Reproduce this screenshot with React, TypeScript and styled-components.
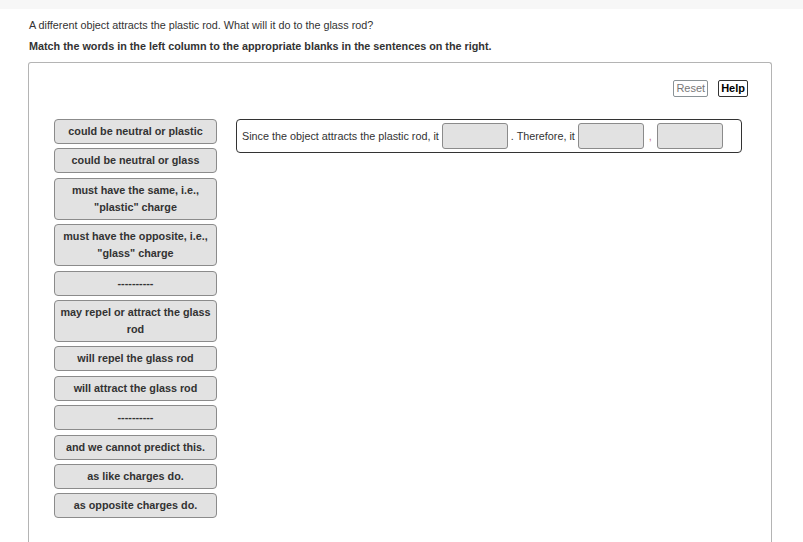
import styled, { createGlobalStyle } from "styled-components"

const GlobalStyle = createGlobalStyle`
  html, body {
    margin: 0;
    padding: 0;
    background: #fff;
    font-family: "Liberation Sans", Arial, sans-serif;
    color: #333;
  }
`

const TopStrip = styled.div`
  height: 9px;
  background: #f7f7f7;
`

const Content = styled.div`
  padding: 9px 31px 0 28px;
`

const Prompt = styled.p<{ bold?: boolean }>`
  margin: 0 0 0 1px;
  font-size: 10.8px;
  line-height: 13px;
  font-weight: ${({ bold }) => (bold ? 700 : 400)};
  padding-top: ${({ bold }) => (bold ? "0" : "1px")};
  padding-bottom: ${({ bold }) => (bold ? "9px" : "8px")};
`

const Panel = styled.div`
  border: 1px solid #b4b4b4;
  border-bottom: none;
  border-radius: 3px 3px 0 0;
  height: 490px;
  padding: 17px 23px 0 25px;
  box-sizing: border-box;
`

const Toolbar = styled.div`
  display: flex;
  justify-content: flex-end;
  gap: 10px;
`

const ToolButton = styled.button<{ strong?: boolean }>`
  font-family: "Liberation Sans", Arial, sans-serif;
  font-size: 11px;
  height: 17px;
  padding: 0 2px;
  line-height: 15px;
  background: #fff;
  border-radius: 2px;
  border: 1px solid ${({ strong }) => (strong ? "#333" : "#8a9296")};
  color: ${({ strong }) => (strong ? "#000" : "#777")};
  font-weight: ${({ strong }) => (strong ? 700 : 400)};
`

const Workspace = styled.div`
  display: flex;
  align-items: flex-start;
  gap: 19px;
  margin-top: 22px;
`

const WordColumn = styled.div`
  display: flex;
  flex-direction: column;
  gap: 4.4px;
  width: 163px;
  flex: none;
`

const WordCard = styled.div`
  box-sizing: border-box;
  border: 1px solid #8b8b8b;
  border-radius: 4px;
  background: #e2e2e2;
  padding: 3px 4px;
  font-size: 10.8px;
  line-height: 17px;
  font-weight: 700;
  text-align: center;
  color: #333;
  min-height: 25px;
`

const Sentence = styled.div`
  flex: none;
  display: flex;
  align-items: center;
  gap: 3px;
  border: 1px solid #333;
  border-radius: 4px;
  padding: 3px 18px 3px 5px;
  font-size: 10.8px;
  color: #333;
`

const Blank = styled.span`
  display: inline-block;
  box-sizing: border-box;
  width: 66px;
  height: 26px;
  border: 1px solid #8b8b8b;
  border-radius: 3px;
  background: #e2e2e2;
`

const Punct = styled.span`
  color: #c77;
  padding: 0 2px;
`

const words = [
  "could be neutral or plastic",
  "could be neutral or glass",
  'must have the same, i.e., "plastic" charge',
  'must have the opposite, i.e., "glass" charge',
  "----------",
  "may repel or attract the glass rod",
  "will repel the glass rod",
  "will attract the glass rod",
  "----------",
  "and we cannot predict this.",
  "as like charges do.",
  "as opposite charges do.",
]

export default function App() {
  return (
    <>
      <GlobalStyle />
      <TopStrip />
      <Content>
        <Prompt>A different object attracts the plastic rod. What will it do to the glass rod?</Prompt>
        <Prompt bold>Match the words in the left column to the appropriate blanks in the sentences on the right.</Prompt>
        <Panel>
          <Toolbar>
            <ToolButton>Reset</ToolButton>
            <ToolButton strong>Help</ToolButton>
          </Toolbar>
          <Workspace>
            <WordColumn>
              {words.map((w, i) => (
                <WordCard key={i}>{w}</WordCard>
              ))}
            </WordColumn>
            <Sentence>
              <span>Since the object attracts the plastic rod, it</span>
              <Blank />
              <span>. Therefore, it</span>
              <Blank />
              <Punct>,</Punct>
              <Blank />
            </Sentence>
          </Workspace>
        </Panel>
      </Content>
    </>
  )
}
